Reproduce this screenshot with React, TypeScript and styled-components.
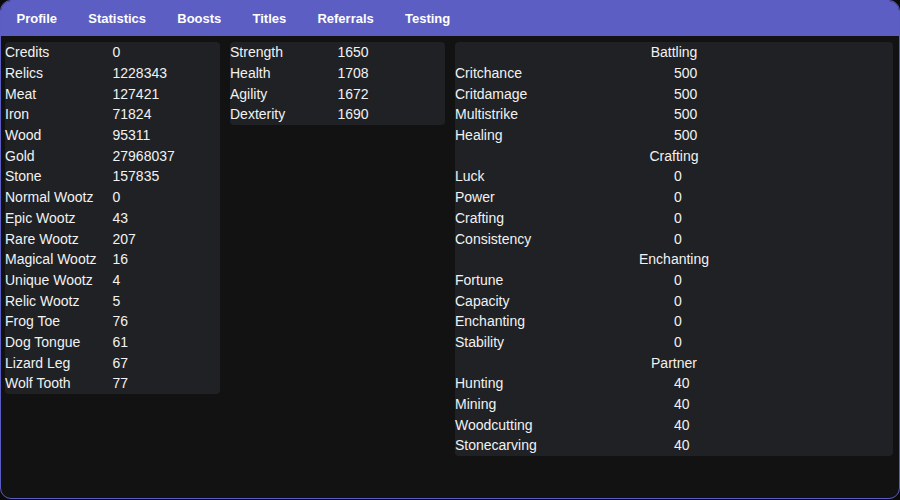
import { Fragment } from "react";
import styled, { createGlobalStyle } from "styled-components";

const GlobalStyle = createGlobalStyle`
  html, body {
    margin: 0;
    padding: 0;
    background: #0a0a0b;
  }
  body {
    font-family: "Liberation Sans", Arial, sans-serif;
  }
`;

const Frame = styled.div`
  box-sizing: border-box;
  width: 900px;
  height: 499px;
  border: 1px solid #5b5dc2;
  border-radius: 11px;
  background: #121213;
  overflow: hidden;
  display: flex;
  flex-direction: column;
`;

const NavBar = styled.nav`
  height: 35px;
  display: flex;
  align-items: center;
  background: #5c5ec4;
  padding-left: 0;
`;

const Tab = styled.div`
  padding: 0 15.6px;
  color: #ffffff;
  font-size: 13px;
  font-weight: bold;
  cursor: pointer;
`;

const Content = styled.div`
  display: flex;
  align-items: flex-start;
  gap: 10px;
  padding: 6px 5px 0 4px;
`;

const Card = styled.div<{ $width: number }>`
  width: ${(p) => p.$width}px;
  display: grid;
  grid-template-columns: 1fr 1fr;
  grid-auto-rows: 20.7px;
  align-items: center;
  background: #1f2124;
  border-radius: 4px;
  color: #f2f2f2;
  font-size: 14px;
`;

const Cell = styled.div`
  white-space: nowrap;
`;

const SectionTitle = styled.div`
  grid-column: 1 / -1;
  text-align: center;
`;

type Row = [string, string];

const resources: Row[] = [
  ["Credits", "0"],
  ["Relics", "1228343"],
  ["Meat", "127421"],
  ["Iron", "71824"],
  ["Wood", "95311"],
  ["Gold", "27968037"],
  ["Stone", "157835"],
  ["Normal Wootz", "0"],
  ["Epic Wootz", "43"],
  ["Rare Wootz", "207"],
  ["Magical Wootz", "16"],
  ["Unique Wootz", "4"],
  ["Relic Wootz", "5"],
  ["Frog Toe", "76"],
  ["Dog Tongue", "61"],
  ["Lizard Leg", "67"],
  ["Wolf Tooth", "77"],
];

const stats: Row[] = [
  ["Strength", "1650"],
  ["Health", "1708"],
  ["Agility", "1672"],
  ["Dexterity", "1690"],
];

const skills: { title: string; rows: Row[] }[] = [
  {
    title: "Battling",
    rows: [
      ["Critchance", "500"],
      ["Critdamage", "500"],
      ["Multistrike", "500"],
      ["Healing", "500"],
    ],
  },
  {
    title: "Crafting",
    rows: [
      ["Luck", "0"],
      ["Power", "0"],
      ["Crafting", "0"],
      ["Consistency", "0"],
    ],
  },
  {
    title: "Enchanting",
    rows: [
      ["Fortune", "0"],
      ["Capacity", "0"],
      ["Enchanting", "0"],
      ["Stability", "0"],
    ],
  },
  {
    title: "Partner",
    rows: [
      ["Hunting", "40"],
      ["Mining", "40"],
      ["Woodcutting", "40"],
      ["Stonecarving", "40"],
    ],
  },
];

const tabs = ["Profile", "Statistics", "Boosts", "Titles", "Referrals", "Testing"];

function Rows({ rows }: { rows: Row[] }) {
  return (
    <>
      {rows.map(([label, value]) => (
        <Fragment key={label}>
          <Cell>{label}</Cell>
          <Cell>{value}</Cell>
        </Fragment>
      ))}
    </>
  );
}

function App() {
  return (
    <>
      <GlobalStyle />
      <Frame>
        <NavBar>
          {tabs.map((t) => (
            <Tab key={t}>{t}</Tab>
          ))}
        </NavBar>
        <Content>
          <Card $width={215}>
            <Rows rows={resources} />
          </Card>
          <Card $width={215}>
            <Rows rows={stats} />
          </Card>
          <Card $width={438}>
            {skills.map((s) => (
              <Fragment key={s.title}>
                <SectionTitle>{s.title}</SectionTitle>
                <Rows rows={s.rows} />
              </Fragment>
            ))}
          </Card>
        </Content>
      </Frame>
    </>
  );
}

export default App;
